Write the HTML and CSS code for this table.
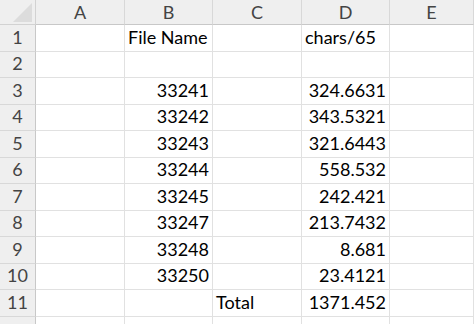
FILE: index.html
```html
<html>
<head>
<title>Sheet1</title>
<link rel="stylesheet" href="styles.css">
<meta http-equiv="Content-Type" content="text/html; charset=UTF-8">
</head>
<body>
<div class="sheet">
  <div class="corner"></div>
  <div class="col-head">A</div>
  <div class="col-head">B</div>
  <div class="col-head">C</div>
  <div class="col-head">D</div>
  <div class="col-head">E</div>

  <div class="row-head">1</div>
  <div class="cell"></div>
  <div class="cell">File Name</div>
  <div class="cell"></div>
  <div class="cell">chars/65</div>
  <div class="cell"></div>

  <div class="row-head">2</div>
  <div class="cell"></div>
  <div class="cell"></div>
  <div class="cell"></div>
  <div class="cell"></div>
  <div class="cell"></div>

  <div class="row-head">3</div>
  <div class="cell"></div>
  <div class="cell num">33241</div>
  <div class="cell"></div>
  <div class="cell num">324.6631</div>
  <div class="cell"></div>

  <div class="row-head">4</div>
  <div class="cell"></div>
  <div class="cell num">33242</div>
  <div class="cell"></div>
  <div class="cell num">343.5321</div>
  <div class="cell"></div>

  <div class="row-head">5</div>
  <div class="cell"></div>
  <div class="cell num">33243</div>
  <div class="cell"></div>
  <div class="cell num">321.6443</div>
  <div class="cell"></div>

  <div class="row-head">6</div>
  <div class="cell"></div>
  <div class="cell num">33244</div>
  <div class="cell"></div>
  <div class="cell num">558.532</div>
  <div class="cell"></div>

  <div class="row-head">7</div>
  <div class="cell"></div>
  <div class="cell num">33245</div>
  <div class="cell"></div>
  <div class="cell num">242.421</div>
  <div class="cell"></div>

  <div class="row-head">8</div>
  <div class="cell"></div>
  <div class="cell num">33247</div>
  <div class="cell"></div>
  <div class="cell num">213.7432</div>
  <div class="cell"></div>

  <div class="row-head">9</div>
  <div class="cell"></div>
  <div class="cell num">33248</div>
  <div class="cell"></div>
  <div class="cell num">8.681</div>
  <div class="cell"></div>

  <div class="row-head">10</div>
  <div class="cell"></div>
  <div class="cell num">33250</div>
  <div class="cell"></div>
  <div class="cell num">23.4121</div>
  <div class="cell"></div>

  <div class="row-head">11</div>
  <div class="cell"></div>
  <div class="cell"></div>
  <div class="cell">Total</div>
  <div class="cell num">1371.452</div>
  <div class="cell"></div>

  <div class="row-head"></div>
  <div class="cell"></div>
  <div class="cell"></div>
  <div class="cell"></div>
  <div class="cell"></div>
  <div class="cell"></div>
</div>
</body>
</html>
```

FILE: styles.css
```css
body {
 margin: 0;
 background-color: #ffffff;
 font-family: Lato, "Open Sans", Arial, sans-serif;
 overflow: hidden;
}
.sheet {
 display: grid;
 grid-template-columns: 36px 89px 88px 89px 88px 1fr;
 grid-template-rows: 25px 27px 26px 27px 26px 27px 26px 27px 26px 27px 26px 27px 8px;
 width: 474px;
 height: 324px;
 overflow: hidden;
}
.corner {
 background-color: #efefef;
 border-right: 1px solid #d2d2d2;
 border-bottom: 1px solid #d2d2d2;
 position: relative;
}
.corner:after {
 content: "";
 position: absolute;
 right: 3px;
 bottom: 2px;
 width: 19px;
 height: 19px;
 background-color: #dcdcdc;
 clip-path: polygon(100% 0, 100% 100%, 0 100%);
}
.col-head {
 background-color: #efefef;
 border-right: 1px solid #d8d8d8;
 border-bottom: 1px solid #c8c8c8;
 color: #444444;
 font-size: 18px;
 display: flex;
 align-items: center;
 justify-content: center;
}
.row-head {
 background-color: #efefef;
 border-right: 1px solid #c8c8c8;
 border-bottom: 1px solid #d8d8d8;
 color: #444444;
 font-size: 18px;
 display: flex;
 align-items: flex-end;
 justify-content: center;
 padding-bottom: 3px;
 overflow: hidden;
}
.cell {
 border-right: 1px solid #e1e1e1;
 border-bottom: 1px solid #e1e1e1;
 color: #000000;
 font-size: 18px;
 display: flex;
 align-items: flex-end;
 padding: 0 3px 3px 3px;
 white-space: nowrap;
}
.num {
 justify-content: flex-end;
}
```
